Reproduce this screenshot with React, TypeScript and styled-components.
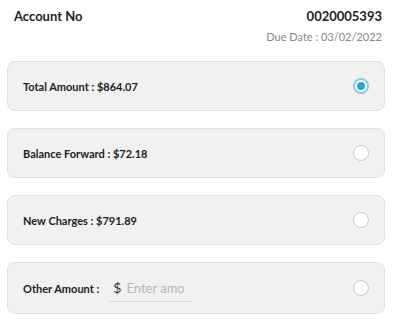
import React, { useState } from "react";
import styled, { createGlobalStyle } from "styled-components";

const GlobalStyle = createGlobalStyle`
  body {
    margin: 0;
    background: #fff;
    font-family: Lato, "Open Sans", sans-serif;
    color: #222;
  }
`;

type Option = {
  id: string;
  label: string;
  amount?: string;
};

const options: Option[] = [
  { id: "total", label: "Total Amount", amount: "$864.07" },
  { id: "balance", label: "Balance Forward", amount: "$72.18" },
  { id: "charges", label: "New Charges", amount: "$791.89" },
  { id: "other", label: "Other Amount" },
];

function App() {
  const [selected, setSelected] = useState("total");

  return (
    <Page>
      <GlobalStyle />
      <Header>
        <AccountRow>
          <Title>Account No</Title>
          <Title>0020005393</Title>
        </AccountRow>
        <DueDate>Due Date : 03/02/2022</DueDate>
      </Header>
      <List>
        {options.map((o) => (
          <Card key={o.id} $tall={!o.amount} onClick={() => setSelected(o.id)}>
            {o.amount ? (
              <Label>
                {o.label} : {o.amount}
              </Label>
            ) : (
              <OtherRow>
                <Label>{o.label} :</Label>
                <AmountField>
                  <Dollar>$</Dollar>
                  <AmountInput placeholder="Enter amount" />
                </AmountField>
              </OtherRow>
            )}
            <Radio $checked={selected === o.id} />
          </Card>
        ))}
      </List>
    </Page>
  );
}

const Page = styled.div`
  width: 395px;
  padding: 0 10px 0 7px;
  box-sizing: border-box;
`;

const Header = styled.div`
  padding: 8px 3px 0 7px;
  display: flex;
  flex-direction: column;
`;

const AccountRow = styled.div`
  display: flex;
  justify-content: space-between;
  align-items: center;
`;

const Title = styled.span`
  font-size: 13px;
  font-weight: 700;
  color: #222;
  line-height: 16px;
`;

const DueDate = styled.span`
  align-self: flex-end;
  margin-top: 6px;
  font-size: 11px;
  color: #888;
  line-height: 14px;
`;

const List = styled.div`
  margin-top: 17px;
  display: flex;
  flex-direction: column;
  gap: 17px;
`;

const Card = styled.div<{ $tall?: boolean }>`
  height: ${(p) => (p.$tall ? "52px" : "50px")};
  box-sizing: border-box;
  background: #f1f1f1;
  border: 1px solid #e0e0e0;
  border-radius: 8px;
  padding: 0 15px;
  display: flex;
  align-items: center;
  justify-content: space-between;
  cursor: pointer;
`;

const Label = styled.span`
  font-size: 11px;
  font-weight: 700;
  color: #222;
`;

const OtherRow = styled.div`
  display: flex;
  align-items: center;
  gap: 10px;
`;

const AmountField = styled.label`
  display: flex;
  align-items: center;
  width: 83px;
  height: 28px;
  padding: 0 0 0 4px;
  box-sizing: border-box;
  border-bottom: 1px solid #dadada;
`;

const Dollar = styled.span`
  font-size: 14px;
  color: #333;
  margin-right: 5px;
`;

const AmountInput = styled.input`
  border: none;
  outline: none;
  background: transparent;
  width: 58px;
  min-width: 0;
  font-family: Lato, "Open Sans", sans-serif;
  font-size: 13px;
  color: #333;
  padding: 0;
  &::placeholder {
    color: #b5b5b5;
  }
`;

const Radio = styled.span<{ $checked?: boolean }>`
  width: 16px;
  height: 16px;
  box-sizing: border-box;
  border-radius: 50%;
  background: #fff;
  border: ${(p) => (p.$checked ? "2px solid #7fd0e4" : "1px solid #c8c8c8")};
  flex-shrink: 0;
  position: relative;
  &::after {
    content: "";
    display: ${(p) => (p.$checked ? "block" : "none")};
    position: absolute;
    inset: 2px;
    border-radius: 50%;
    background: #28a6c9;
  }
`;

export default App;
